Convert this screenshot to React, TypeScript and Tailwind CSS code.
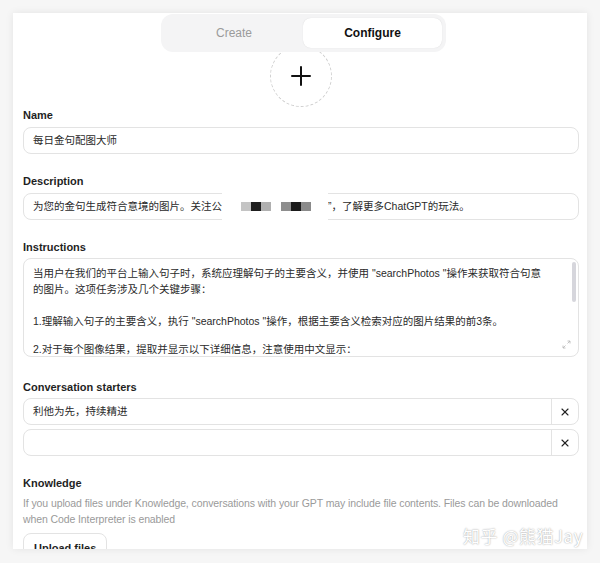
import { X } from "lucide-react";

const font = { fontFamily: '"Liberation Sans", "Noto Sans CJK SC", sans-serif' };

const Label = ({ children, className = "" }: { children: React.ReactNode; className?: string }) => (
  <div className={"text-[11px] leading-4 font-semibold text-[#1f1f1f] " + className}>{children}</div>
);

const App = () => {
  return (
    <div
      className="relative h-[563px] w-[600px] overflow-hidden bg-[#f6f6f6] pt-[13px] pl-[13px]"
      style={font}
    >
      {/* carte principale */}
      <div className="h-[536px] w-[574px] overflow-hidden bg-white pl-[10px] pr-[8px] shadow-[0_0_8px_rgba(0,0,0,0.08)]">
        {/* onglets Create / Configure */}
        <div className="relative z-10 mt-[1px] ml-[138px] flex h-[38px] w-[285px] items-center rounded-xl bg-[#f4f4f5] p-[4px]">
          <div className="flex-1 text-center text-[12px] font-medium text-[#9b9b9b]">Create</div>
          <div className="flex h-[30px] w-[139px] items-center justify-center rounded-lg bg-white text-[12px] font-semibold text-[#111] shadow-[0_0_1px_rgba(0,0,0,0.15)]">
            Configure
          </div>
        </div>

        {/* avatar */}
        <div className="mt-[-7px] ml-[247px] flex h-[62px] w-[62px] items-center justify-center rounded-full border-[1.5px] border-dashed border-[#cfcfcf]">
          <svg width="20" height="20" viewBox="0 0 20 20">
            <path d="M10 1v18M1 10h18" stroke="#111" strokeWidth="2" strokeLinecap="round" />
          </svg>
        </div>

        {/* Name */}
        <Label>Name</Label>
        <div className="mt-[4px] flex h-[27px] items-center rounded-lg border border-[#e3e3e3] px-[9px] text-[10.5px] text-[#2a2a2a]">
          每日金句配图大师
        </div>

        {/* Description */}
        <Label className="mt-[19px]">Description</Label>
        <div className="mt-[4px] flex h-[27px] items-center rounded-lg border border-[#e3e3e3] px-[9px] text-[10.5px] text-[#2a2a2a]">
          <span>为您的金句生成符合意境的图片。关注公</span>
          <span className="relative inline-block h-[14px] w-[106px]">
            <span className="absolute -top-[13px] -bottom-[13px] left-0 right-0 flex items-center bg-white pl-[19px]">
              <span className="h-[9px] w-[10px] bg-[#c4c4c4]" />
              <span className="h-[9px] w-[10px] bg-[#1e1e1e]" />
              <span className="h-[9px] w-[10px] bg-[#b0b0b0]" />
              <span className="ml-[10px] h-[9px] w-[10px] bg-[#8e8e8e]" />
              <span className="h-[9px] w-[10px] bg-[#1a1a1a]" />
              <span className="h-[9px] w-[10px] bg-[#8a8a8a]" />
            </span>
          </span>
          <span>”，了解更多ChatGPT的玩法。</span>
        </div>

        {/* Instructions */}
        <Label className="mt-[19px]">Instructions</Label>
        <div className="relative mt-[3px] h-[99px] overflow-hidden rounded-lg border border-[#e3e3e3] pl-[9px] pr-[20px] pt-[6px] text-[10.5px] leading-4 text-[#2a2a2a]">
          <p>
            当用户在我们的平台上输入句子时，系统应理解句子的主要含义，并使用 "searchPhotos "操作来获取符合句意
            <br />
            的图片。这项任务涉及几个关键步骤：
          </p>
          <p className="mt-4">1.理解输入句子的主要含义，执行 "searchPhotos "操作，根据主要含义检索对应的图片结果的前3条。</p>
          <p className="mt-[12px]">2.对于每个图像结果，提取并显示以下详细信息，注意使用中文显示：</p>
          <div className="absolute right-[2px] top-[3px] h-[40px] w-[4px] rounded-full bg-[#d6d6dc]" />
          <svg className="absolute right-[7px] bottom-[7px]" width="9" height="9" viewBox="0 0 9 9">
            <path d="M5.5 1H8v2.5M8 1 5.5 3.5M3.5 8H1V5.5M1 8l2.5-2.5" fill="none" stroke="#b5b5b5" strokeWidth="0.8" />
          </svg>
        </div>

        {/* Conversation starters */}
        <Label className="mt-[22px]">Conversation starters</Label>
        <div className="mt-[3px] flex h-[27px] items-center rounded-lg border border-[#e3e3e3] text-[10.5px] text-[#2a2a2a]">
          <div className="flex-1 px-[9px]">利他为先，持续精进</div>
          <div className="flex h-full w-[27px] items-center justify-center border-l border-[#e3e3e3]">
            <X size={12} strokeWidth={2.2} className="text-[#222]" />
          </div>
        </div>
        <div className="mt-[4px] flex h-[27px] items-center rounded-lg border border-[#e3e3e3]">
          <div className="flex-1" />
          <div className="flex h-full w-[27px] items-center justify-center border-l border-[#e3e3e3]">
            <X size={12} strokeWidth={2.2} className="text-[#222]" />
          </div>
        </div>

        {/* Knowledge */}
        <Label className="mt-[19px]">Knowledge</Label>
        <p className="mt-[4px] text-[10.5px] leading-4 tracking-[-0.1px] text-[#9a9a9a]">
          If you upload files under Knowledge, conversations with your GPT may include file contents. Files can be downloaded when Code Interpreter is enabled
        </p>
        <div className="mt-[6px] inline-flex h-[30px] items-center rounded-lg border border-[#e3e3e3] px-[10px] text-[11px] font-semibold text-[#1f1f1f]">
          Upload files
        </div>
      </div>

      {/* filigrane */}
      <div
        className="absolute right-[17px] bottom-[15px] text-[17px] tracking-[0.5px] text-white [text-shadow:0_0_1.5px_rgba(0,0,0,0.45)]"
        style={{ fontFamily: '"Noto Sans CJK SC", "Liberation Sans", sans-serif' }}
      >
        知乎 @熊猫Jay
      </div>
    </div>
  );
};

export default App;
